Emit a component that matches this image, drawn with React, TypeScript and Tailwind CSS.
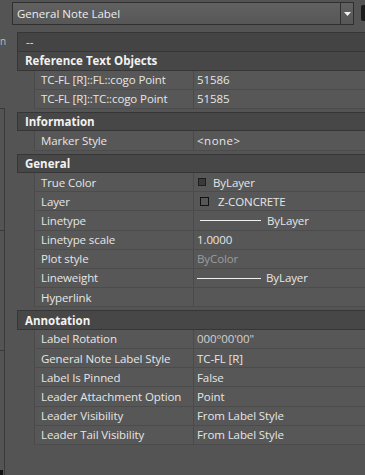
import React from "react";

type Row = { label: string; value: React.ReactNode };

const font = { fontFamily: '"Open Sans", "Noto Sans", Arial, sans-serif' };

function Header({ title, first }: { title: string; first?: boolean }) {
  return (
    <div
      className={`flex h-[19.5px] items-center border-y border-l border-[#363636] bg-[#474747] pl-[7px] text-[11.5px] font-bold text-[#f2f2f2] ${first ? "" : "mt-[3px]"}`}
    >
      {title}
    </div>
  );
}

function PropRow({ label, value }: Row) {
  return (
    <div className="flex h-[19.2px]">
      <div className="w-[17px] shrink-0" />
      <div className="flex flex-1 border-b border-[#4c4c4c] bg-[#575757]">
        <div className="flex w-[160px] shrink-0 items-center border-l border-r border-[#4a4a4a] pl-[6px] text-[11.5px] tracking-[-0.1px] text-[#e6e6e6] whitespace-nowrap">
          {label}
        </div>
        <div className="flex flex-1 items-center pl-[3px] text-[11.5px] tracking-[-0.1px] text-[#e6e6e6] whitespace-nowrap">
          {value}
        </div>
      </div>
    </div>
  );
}

function LineVal({ w, gap }: { w: number; gap: number }) {
  return (
    <div className="flex items-center">
      <div className="h-px bg-[#f0f0f0]" style={{ width: w, marginRight: gap }} />
      <span>ByLayer</span>
    </div>
  );
}

export default function App() {
  return (
    <div className="relative h-[475px] w-[365px] overflow-hidden bg-[#545454]" style={font}>
      {/* left cropped panel edge */}
      <div className="absolute left-0 top-0 h-full w-[5px]">
        <div className="absolute left-0 top-[36px] text-[10px] leading-none text-[#bbb]">n</div>
        <div className="absolute left-0 top-[108px] h-px w-[5px] bg-[#3a3a3a]" />
        <div className="absolute left-[4px] top-[108px] h-[367px] w-px bg-[#3a3a3a]" />
        <div className="absolute left-0 top-[230px] h-px w-[5px] bg-[#3a3a3a]" />
        <div className="absolute left-0 top-[350px] h-px w-[5px] bg-[#3a3a3a]" />
        <div className="absolute left-0 top-[470px] h-[5px] w-[3px] bg-[#111]" />
      </div>

      <div className="flex flex-col pl-[12px] pt-[2px]">
        {/* dropdown */}
        <div className="flex items-start">
          <div className="flex h-[23px] w-[343px] border border-[#2f2f2f] bg-gradient-to-b from-[#616161] to-[#575757]">
            <div className="flex flex-1 items-center pl-[4px] text-[11.5px] text-[#ececec]">
              General Note Label
            </div>
            <div className="flex w-[13px] items-center justify-center border-l border-[#2f2f2f]">
              <svg width="7" height="4" viewBox="0 0 7 4">
                <path d="M0 0 H7 L3.5 4 Z" fill="#f2f2f2" />
              </svg>
            </div>
          </div>
          <div className="ml-[7px] mt-[3px] h-[16px] w-[4px] rounded-l-[2px] bg-[#1c1c1c]" />
        </div>

        {/* property grid */}
        <div className="ml-[5px] mt-[7px] flex flex-col">
          <div className="flex h-[19px] items-center border-l border-t border-[#363636] bg-[#444444] pl-[8px] text-[11.5px] text-[#e6e6e6]">
            --
          </div>
          <Header title="Reference Text Objects" first />
          <PropRow label="TC-FL [R]::FL::cogo Point" value="51586" />
          <PropRow label="TC-FL [R]::TC::cogo Point" value="51585" />

          <Header title="Information" />
          <PropRow label="Marker Style" value={<span className="tracking-[0.5px]">&lt;none&gt;</span>} />

          <Header title="General" />
          <PropRow
            label="True Color"
            value={
              <div className="flex items-center">
                <div className="ml-[1px] mr-[7px] h-[8px] w-[8px] border border-[#1e1e1e] bg-[#3a3a3a]" />
                <span>ByLayer</span>
              </div>
            }
          />
          <PropRow
            label="Layer"
            value={
              <div className="flex items-center">
                <div className="ml-[3px] mr-[9px] h-[9px] w-[9px] border border-[#111]" />
                <span>Z-CONCRETE</span>
              </div>
            }
          />
          <PropRow label="Linetype" value={<div className="pl-[3px]"><LineVal w={61} gap={6} /></div>} />
          <PropRow label="Linetype scale" value="1.0000" />
          <PropRow label="Plot style" value={<span className="text-[#9c9c9c]">ByColor</span>} />
          <PropRow label="Lineweight" value={<LineVal w={64} gap={5} />} />
          <PropRow label="Hyperlink" value="" />

          <Header title="Annotation" />
          <PropRow label="Label Rotation" value={<span className="text-[#d2d2d2]">000°00'00"</span>} />
          <PropRow label="General Note Label Style" value="TC-FL [R]" />
          <PropRow label="Label Is Pinned" value="False" />
          <PropRow label="Leader Attachment Option" value="Point" />
          <PropRow label="Leader Visibility" value="From Label Style" />
          <PropRow label="Leader Tail Visibility" value="From Label Style" />
        </div>
      </div>
    </div>
  );
}
